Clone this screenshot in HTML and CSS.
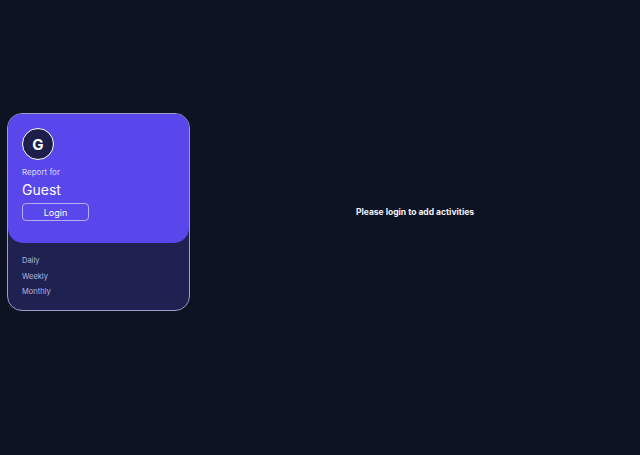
FILE: index.html
```html
<!DOCTYPE html>
<html>
<head>
<meta charset="utf-8">
<link rel="stylesheet" href="styles.css">
</head>
<body>
<div class="page">
  <aside class="card">
    <div class="profile">
      <div class="avatar">G</div>
      <div class="report-for">Report for</div>
      <div class="name">Guest</div>
      <button class="login">Login</button>
    </div>
    <ul class="periods">
      <li>Daily</li>
      <li>Weekly</li>
      <li>Monthly</li>
    </ul>
  </aside>
  <main class="content">
    <p class="empty">Please login to add activities</p>
  </main>
</div>
</body>
</html>
```

FILE: styles.css
```css
* { box-sizing: border-box; }
html, body { margin: 0; padding: 0; }
body {
  background: #0e1324;
  font-family: Inter, "Noto Sans", sans-serif;
  color: #fff;
  height: 455px;
}
.page {
  display: flex;
  align-items: center;
  padding: 113px 0 0 7px;
}
.card {
  width: 183px;
  border: 1px solid #9a9ec8;
  border-radius: 15px;
  background: #1f2150;
  overflow: hidden;
}
.profile {
  background: #5847eb;
  border-radius: 0 0 15px 15px;
  padding: 14px 14px 21px 14px;
  height: 129px;
}
.avatar {
  width: 32px;
  height: 32px;
  border-radius: 50%;
  border: 1.5px solid #fff;
  background: #1c1f4a;
  display: flex;
  align-items: center;
  justify-content: center;
  font-weight: 700;
  font-size: 15px;
}
.report-for {
  margin-top: 7px;
  font-size: 8px;
  color: #dcd9ff;
}
.name {
  margin-top: 3px;
  font-size: 14px;
  line-height: 20px;
  font-weight: 400;
}
.login {
  display: block;
  margin-top: 3px;
  width: 67px;
  height: 18px;
  border: 1px solid #b5b0f5;
  border-radius: 4px;
  background: transparent;
  color: #fff;
  font-family: inherit;
  font-size: 9px;
  padding: 0;
}
.periods {
  list-style: none;
  margin: 0;
  padding: 10px 14px 10px 14px;
  font-size: 7.5px;
  color: #b3b6e4;
}
.periods li {
  line-height: 15.5px;
}
.content {
  flex: 1;
  display: flex;
  justify-content: center;
  align-items: center;
}
.empty {
  margin: 1px 0 0 0;
  font-size: 8.5px;
  font-weight: 700;
  color: #f2f2f7;
}
```
